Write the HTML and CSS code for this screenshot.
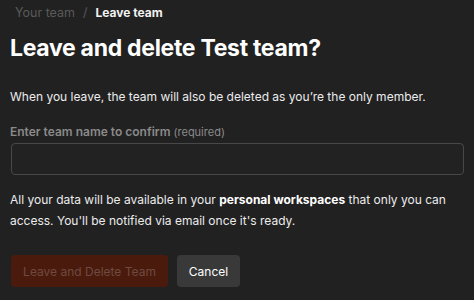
FILE: index.html
```html
<!DOCTYPE html>
<html lang="en">
<head>
    <meta charset="UTF-8">
    <title>Leave team</title>
    <link rel="stylesheet" href="styles.css">
</head>
<body>
    <div class="page">
        <!-- Breadcrumb -->
        <nav class="breadcrumb">
            <a href="#" class="crumb-link">Your team</a>
            <span class="crumb-sep">/</span>
            <span class="crumb-current">Leave team</span>
        </nav>

        <h1 class="title">Leave and delete Test team?</h1>

        <p class="note">When you leave, the team will also be deleted as you’re the only member.</p>

        <label class="field">
            <span class="field-label">Enter team name to confirm <span class="field-hint">(required)</span></span>
            <input type="text" class="field-input">
        </label>

        <p class="info">All your data will be available in your <strong>personal workspaces</strong> that only you can access. You'll be notified via email once it's ready.</p>

        <div class="actions">
            <button class="btn btn-danger" disabled>Leave and Delete Team</button>
            <button class="btn btn-secondary">Cancel</button>
        </div>
    </div>
</body>
</html>
```

FILE: styles.css
```css
* {
    margin: 0;
    padding: 0;
    box-sizing: border-box;
}

body {
    font-family: Inter, "Noto Sans", sans-serif;
    background: #212121;
    color: #ececec;
    width: 474px;
    height: 300px;
    overflow: hidden;
}

.page {
    padding: 4px 11px 0 10px;
    display: flex;
    flex-direction: column;
}

/* Breadcrumb */
.breadcrumb {
    display: flex;
    align-items: center;
    gap: 8px;
    font-size: 12.5px;
    line-height: 18px;
    padding-left: 5px;
}

.crumb-link {
    color: #5a5a5a;
    text-decoration: none;
}

.crumb-sep {
    color: #5a5a5a;
}

.crumb-current {
    color: #f2f2f2;
    font-size: 12px;
    font-weight: 700;
}

.title {
    margin-top: 11px;
    font-size: 23px;
    line-height: 30px;
    font-weight: 700;
    color: #ffffff;
    letter-spacing: -0.3px;
}

.note {
    margin-top: 25px;
    font-size: 12px;
    line-height: 18px;
    color: #ececec;
}

.field {
    margin-top: 17px;
    display: flex;
    flex-direction: column;
    gap: 2px;
}

.field-label {
    font-size: 12px;
    line-height: 18px;
    font-weight: 600;
    color: #8a8a8a;
}

.field-hint {
    font-size: 11px;
    font-weight: 400;
    color: #8a8a8a;
}

.field-input {
    height: 32px;
    width: 453px;
    margin-left: 1px;
    background: #222222;
    border: 1px solid #484848;
    border-radius: 4px;
    color: #ececec;
    font-family: inherit;
    font-size: 12px;
    padding: 0 10px;
}

.info {
    margin-top: 14px;
    font-size: 12px;
    line-height: 21px;
    color: #ececec;
}

.info strong {
    font-weight: 700;
    color: #ffffff;
}

.actions {
    margin-top: 24px;
    margin-left: 1px;
    display: flex;
    gap: 9px;
}

.btn {
    height: 32px;
    border: none;
    border-radius: 4px;
    font-family: inherit;
    font-size: 12px;
    white-space: nowrap;
}

.btn-danger {
    background: #4a1b0d;
    color: #6e4a40;
    width: 157px;
}

.btn-secondary {
    background: #393939;
    color: #ffffff;
    width: 63px;
}
```
